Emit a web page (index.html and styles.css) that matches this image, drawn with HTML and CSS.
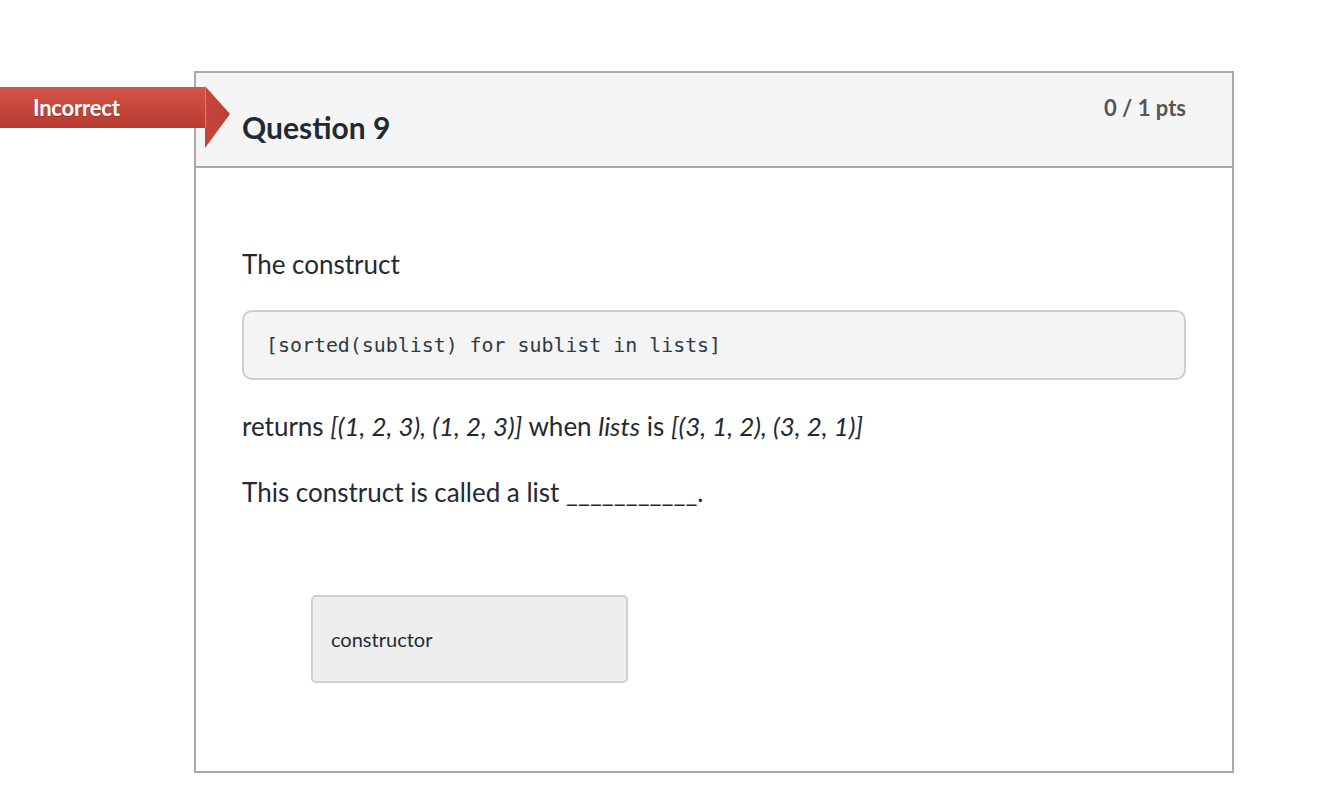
FILE: index.html
```html
<!DOCTYPE html>
<html lang="en">
<head>
<meta charset="utf-8">
<title>Question 9</title>
<link rel="stylesheet" href="styles.css">
</head>
<body>
<div class="page">
  <div class="question">
    <div class="answer-arrow">
      <svg class="arrow-svg" width="232" height="64" viewBox="0 0 232 64">
        <defs>
          <linearGradient id="bar" x1="0" y1="0" x2="0" y2="1">
            <stop offset="0" stop-color="#d5564b"/>
            <stop offset="1" stop-color="#b63a2f"/>
          </linearGradient>
          <linearGradient id="head" x1="0" y1="0" x2="1" y2="0">
            <stop offset="0" stop-color="#c8463b"/>
            <stop offset="1" stop-color="#b94036"/>
          </linearGradient>
        </defs>
        <rect x="0" y="1" width="206" height="41" fill="url(#bar)"/>
        <polygon points="205,0 230,28 205,62" fill="url(#head)"/>
        <line x1="205.5" y1="1" x2="205.5" y2="42" stroke="#e07a70" stroke-width="1"/>
      </svg>
      <span class="arrow-label">Incorrect</span>
    </div>
    <div class="q-header">
      <h2 class="q-title">Question 9</h2>
      <div class="q-points">0 / 1 pts</div>
    </div>
    <div class="q-body">
      <p class="q-text">The construct</p>
      <pre class="code">[sorted(sublist) for sublist in lists]</pre>
      <p class="q-text">returns <em>[(1, 2, 3), (1, 2, 3)]</em> when <em>lists</em> is <em>[(3, 1, 2), (3, 2, 1)]</em></p>
      <p class="q-text">This construct is called a list ___________.</p>
      <div class="answers">
        <div class="answer-box">constructor</div>
      </div>
    </div>
  </div>
</div>
</body>
</html>
```

FILE: styles.css
```css
* { box-sizing: border-box; }
html, body { margin: 0; padding: 0; background: #fff; }
body {
  font-family: Lato, "Open Sans", "Liberation Sans", sans-serif;
  color: #2d3b45;
}
.page {
  padding: 71px 0 0 194px;
}
.question {
  position: relative;
  width: 1040px;
  border: 2px solid #a9a9a9;
  background: #fff;
}
.answer-arrow {
  position: absolute;
  left: -196px;
  top: 13px;
  width: 232px;
  height: 64px;
}
.arrow-svg { display: block; }
.arrow-label {
  position: absolute;
  left: 33px;
  top: 8px;
  color: #fff;
  font-size: 22px;
  font-weight: 700;
  letter-spacing: -0.2px;
  text-shadow: 0 1px 1px rgba(0,0,0,0.25);
}
.q-header {
  height: 95px;
  background: #f5f5f5;
  border-bottom: 2px solid #a9a9a9;
  display: flex;
  justify-content: space-between;
  align-items: flex-start;
  padding: 0 46px;
}
.q-title {
  margin: 36px 0 0 0;
  font-size: 30px;
  font-weight: 700;
  line-height: 36px;
  color: #1f2a33;
}
.q-points {
  margin-top: 21px;
  font-size: 22px;
  font-weight: 700;
  color: #555;
  line-height: 28px;
}
.q-body {
  padding: 80px 46px 88px 46px;
}
.q-text {
  margin: 0;
  font-size: 26px;
  line-height: 32px;
  color: #1f2a33;
}
.q-text em { font-style: italic; }
.code {
  margin: 30px 0 30px 0;
  height: 70px;
  background: #f4f4f4;
  border: 2px solid #cbcfd2;
  border-radius: 10px;
  padding: 0 22px;
  display: flex;
  align-items: center;
  font-family: "DejaVu Sans Mono", "Liberation Mono", monospace;
  font-size: 19.9px;
  color: #2d3b45;
}
.code + .q-text { margin-bottom: 34px; }
.answers {
  padding: 87px 0 0 69px;
}
.answer-box {
  width: 317px;
  height: 88px;
  background: #eeeeee;
  border: 2px solid #cfcfcf;
  border-radius: 5px;
  padding: 0 18px;
  display: flex;
  align-items: center;
  font-size: 20px;
  color: #1f2a33;
}
```
